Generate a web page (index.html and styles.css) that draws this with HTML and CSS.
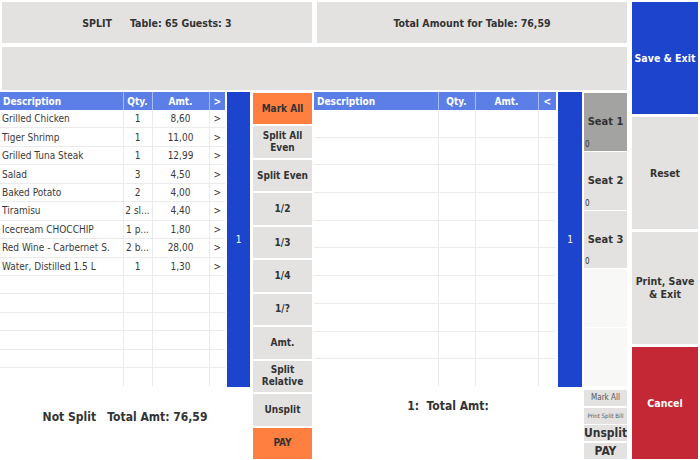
FILE: index.html
```html
<!DOCTYPE html>
<html>
<head>
<meta charset="utf-8">
<link rel="stylesheet" href="styles.css">
</head>
<body>
<div class="page">
  <div class="main">
    <div class="topbar">
      <div class="tbox"><span class="split-word">SPLIT</span><span>Table: 65 Guests: 3</span></div>
      <div class="tbox">Total Amount for Table: 76,59</div>
    </div>
    <div class="band"></div>
    <div class="content">
      <div class="tablewrap">
        <table class="items items-left">
          <colgroup><col class="c-desc"><col class="c-qty"><col class="c-amt"><col class="c-arr"></colgroup>
          <thead><tr><th class="desc">Description</th><th>Qty.</th><th>Amt.</th><th>&gt;</th></tr></thead>
          <tbody>
            <tr><td class="desc">Grilled Chicken</td><td>1</td><td>8,60</td><td>&gt;</td></tr>
            <tr><td class="desc">Tiger Shrimp</td><td>1</td><td>11,00</td><td>&gt;</td></tr>
            <tr><td class="desc">Grilled Tuna Steak</td><td>1</td><td>12,99</td><td>&gt;</td></tr>
            <tr><td class="desc">Salad</td><td>3</td><td>4,50</td><td>&gt;</td></tr>
            <tr><td class="desc">Baked Potato</td><td>2</td><td>4,00</td><td>&gt;</td></tr>
            <tr><td class="desc">Tiramisu</td><td>2 sl...</td><td>4,40</td><td>&gt;</td></tr>
            <tr><td class="desc">Icecream CHOCCHIP</td><td>1 p...</td><td>1,80</td><td>&gt;</td></tr>
            <tr><td class="desc">Red Wine - Carbernet S.</td><td>2 b...</td><td>28,00</td><td>&gt;</td></tr>
            <tr><td class="desc">Water, Distilled 1.5 L</td><td>1</td><td>1,30</td><td>&gt;</td></tr>
            <tr><td></td><td></td><td></td><td></td></tr>
            <tr><td></td><td></td><td></td><td></td></tr>
            <tr><td></td><td></td><td></td><td></td></tr>
            <tr><td></td><td></td><td></td><td></td></tr>
            <tr><td></td><td></td><td></td><td></td></tr>
            <tr class="last"><td></td><td></td><td></td><td></td></tr>
          </tbody>
        </table>
      </div>
      <div class="vbar">1</div>
      <div class="actions">
        <div class="btn orange">Mark All</div>
        <div class="btn">Split All<br>Even</div>
        <div class="btn">Split Even</div>
        <div class="btn">1/2</div>
        <div class="btn">1/3</div>
        <div class="btn">1/4</div>
        <div class="btn">1/?</div>
        <div class="btn">Amt.</div>
        <div class="btn">Split<br>Relative</div>
        <div class="btn">Unsplit</div>
        <div class="btn orange">PAY</div>
      </div>
      <div class="tablewrap">
        <table class="items items-right">
          <colgroup><col class="r-desc"><col class="r-qty"><col class="r-amt"><col class="r-arr"></colgroup>
          <thead><tr><th class="desc">Description</th><th>Qty.</th><th>Amt.</th><th>&lt;</th></tr></thead>
          <tbody>
            <tr><td></td><td></td><td></td><td></td></tr>
            <tr><td></td><td></td><td></td><td></td></tr>
            <tr><td></td><td></td><td></td><td></td></tr>
            <tr><td></td><td></td><td></td><td></td></tr>
            <tr><td></td><td></td><td></td><td></td></tr>
            <tr><td></td><td></td><td></td><td></td></tr>
            <tr><td></td><td></td><td></td><td></td></tr>
            <tr><td></td><td></td><td></td><td></td></tr>
            <tr><td></td><td></td><td></td><td></td></tr>
            <tr class="last"><td></td><td></td><td></td><td></td></tr>
          </tbody>
        </table>
      </div>
      <div class="vbar">1</div>
      <div class="seats">
        <div class="seat active"><span class="seat-name">Seat 1</span><span class="seat-val">0</span></div>
        <div class="seat"><span class="seat-name">Seat 2</span><span class="seat-val">0</span></div>
        <div class="seat"><span class="seat-name">Seat 3</span><span class="seat-val">0</span></div>
        <div class="seat empty"></div>
        <div class="seat empty"></div>
      </div>
      <div class="sum sum-left">Not Split&nbsp;&nbsp; Total Amt: 76,59</div>
      <div class="sum sum-right">1:&nbsp; Total Amt:</div>
      <div class="minis">
        <div class="mini m-mark">Mark All</div>
        <div class="mini m-print">Print Split Bill</div>
        <div class="mini m-big">Unsplit</div>
        <div class="mini m-big">PAY</div>
      </div>
    </div>
  </div>
  <div class="side">
    <div class="sbtn blue">Save &amp; Exit</div>
    <div class="sbtn">Reset</div>
    <div class="sbtn">Print, Save<br>&amp; Exit</div>
    <div class="sbtn red">Cancel</div>
  </div>
</div>
</body>
</html>
```
FILE: styles.css
```css
html, body {
  margin: 0;
  padding: 0;
  background: #ffffff;
}
body {
  font-family: "DejaVu Sans Condensed", "DejaVu Sans", sans-serif;
  font-stretch: condensed;
  font-size: 10px;
  color: #333333;
}
.page {
  display: flex;
  width: 700px;
  height: 460px;
  overflow: hidden;
}
.main {
  width: 630px;
  display: flex;
  flex-direction: column;
}
.topbar {
  display: flex;
  gap: 5px;
  margin: 2px 0 0 2px;
  height: 41px;
}
.tbox {
  width: 310px;
  background: #e3e2e0;
  display: flex;
  align-items: center;
  justify-content: center;
  font-weight: bold;
  font-size: 10.5px;
  color: #333;
}
.split-word {
  margin-right: 18px;
}
.band {
  margin: 4px 0 0 2px;
  width: 625px;
  height: 43px;
  background: #e3e2e0;
}
.content {
  margin-top: 2px;
  display: grid;
  grid-template-columns: 225px 23px 60px 242px 24px 43px;
  grid-template-rows: 295px 73px;
  column-gap: 2px;
}
.tablewrap {
  grid-row: 1;
  overflow: hidden;
}
.items {
  border-collapse: collapse;
  table-layout: fixed;
  width: 100%;
}
.c-desc { width: 123px; }
.c-qty { width: 29px; }
.c-amt { width: 57px; }
.c-arr { width: 16px; }
.r-desc { width: 124px; }
.r-qty { width: 37px; }
.r-amt { width: 63px; }
.r-arr { width: 18px; }
.items th {
  background: #5b7fe7;
  color: #ffffff;
  font-weight: bold;
  font-size: 10px;
  height: 18px;
  padding: 0;
  text-align: center;
  border-left: 1px solid #a9bcf2;
  white-space: nowrap;
  overflow: hidden;
}
.items th:first-child { border-left: none; }
.items th.desc {
  text-align: left;
  padding-left: 3px;
}
.items td {
  padding: 0;
  text-align: center;
  border-left: 1px solid #ebebeb;
  border-bottom: 1px solid #ebebeb;
  white-space: nowrap;
  overflow: hidden;
  color: #3a3a3a;
}
.items td:first-child { border-left: none; }
.items td.desc {
  text-align: left;
  padding-left: 2px;
}
.items tr.last td { border-bottom: none; }
.items-left td { height: 17.45px; }
.items-right td { height: 26.7px; }
.vbar {
  grid-row: 1;
  background: #1c44cc;
  color: #ffffff;
  display: flex;
  align-items: center;
  justify-content: center;
  font-size: 10px;
}
.actions {
  grid-column: 3;
  grid-row: 1 / 3;
  display: flex;
  flex-direction: column;
  gap: 2px;
  padding: 1px 0 1px 1px;
}
.btn {
  flex: 1;
  background: #e3e2e0;
  display: flex;
  align-items: center;
  justify-content: center;
  text-align: center;
  font-weight: bold;
  font-size: 10px;
  line-height: 12px;
  color: #333;
}
.btn.orange {
  background: #ff7f40;
}
.seats {
  grid-column: 6;
  grid-row: 1;
  display: flex;
  flex-direction: column;
  gap: 1px;
  padding-top: 1px;
  padding-bottom: 1px;
}
.seat {
  flex: 1;
  background: #e3e2e0;
  position: relative;
  display: flex;
  align-items: center;
  justify-content: center;
}
.seat.active { background: #a3a3a1; }
.seat.empty { background: #f8f8f6; }
.seat-name {
  font-weight: bold;
  font-size: 11px;
  color: #333;
}
.seat-val {
  position: absolute;
  left: 1px;
  bottom: 2px;
  font-size: 8px;
  color: #333;
}
.sum {
  grid-row: 2;
  font-weight: bold;
  font-size: 12px;
  color: #333;
  text-align: center;
}
.sum-left {
  grid-column: 1 / 3;
  padding-top: 23px;
}
.sum-right {
  grid-column: 4 / 6;
  padding-top: 12px;
}
.minis {
  grid-column: 6;
  grid-row: 2;
  display: flex;
  flex-direction: column;
  gap: 1.7px;
  padding: 3px 0 1px 0;
}
.mini {
  flex: 1;
  background: #e3e2e0;
  display: flex;
  align-items: center;
  justify-content: center;
  white-space: nowrap;
  overflow: hidden;
}
.m-mark {
  font-size: 8px;
  color: #555;
}
.m-print {
  font-size: 6px;
  color: #555;
}
.m-big {
  font-size: 12px;
  font-weight: bold;
  color: #333;
}
.side {
  margin-left: 2px;
  width: 66px;
  display: flex;
  flex-direction: column;
  gap: 3px;
  padding: 2px 0 1px 0;
}
.sbtn {
  flex: 1;
  background: #e3e2e0;
  display: flex;
  align-items: center;
  justify-content: center;
  text-align: center;
  font-weight: bold;
  font-size: 10.5px;
  line-height: 13px;
  color: #333;
}
.sbtn.blue {
  background: #1c44cc;
  color: #fff;
}
.sbtn.red {
  background: #c42834;
  color: #fff;
}
```
